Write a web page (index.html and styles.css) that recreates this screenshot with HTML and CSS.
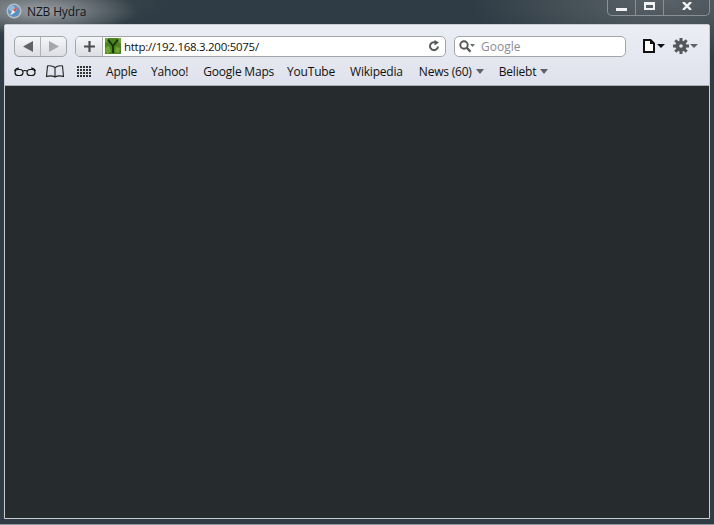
FILE: index.html
```html
<!DOCTYPE html>
<html lang="de">
<head>
<meta charset="utf-8">
<title>NZB Hydra</title>
<link rel="stylesheet" href="styles.css">
</head>
<body>
<div class="frame">
  <header class="titlebar">
    <svg class="safari" width="16" height="16" viewBox="0 0 16 16">
      <circle cx="8" cy="8" r="7.500" fill="#b9bec4"/>
      <circle cx="8" cy="8" r="6" fill="#5a8fc4"/>
      <circle cx="6" cy="5.500" r="3" fill="#8fb9dd"/>
      <path d="M12 3.500 L9.200 9.200 L4 12.500 L6.800 6.800 Z" fill="#eef2f6"/>
      <path d="M12 3.500 L9.200 9.200 L6.800 6.800 Z" fill="#d9553f"/>
    </svg>
    <span class="title">NZB Hydra</span>
    <div class="controls">
      <div class="ctl ctl-min"><span class="glyph-min"></span></div>
      <div class="ctl ctl-max"><span class="glyph-max"></span></div>
      <div class="ctl ctl-close">
        <svg width="10" height="8" viewBox="0 0 10 8"><path d="M1 0 L9 8 M9 0 L1 8" stroke="#f2f4f5" stroke-width="2.400"/></svg>
      </div>
    </div>
  </header>
  <div class="window">
    <div class="toolbar">
      <div class="row row-main">
        <div class="navgroup">
          <button class="navbtn"><svg width="10" height="11" viewBox="0 0 10 11"><path d="M10 0 V11 L0 5.500 Z" fill="#5f6266"/></svg></button>
          <button class="navbtn"><svg width="10" height="11" viewBox="0 0 10 11"><path d="M0 0 V11 L10 5.500 Z" fill="#a4a7ab"/></svg></button>
        </div>
        <div class="address">
          <span class="addbtn"><svg width="11" height="11" viewBox="0 0 11 11"><path d="M5.500 0 V11 M0 5.500 H11" stroke="#4b4d50" stroke-width="2.200"/></svg></span>
          <span class="favicon"><svg width="16" height="16" viewBox="0 0 16 16"><rect width="16" height="16" fill="#4c8420"/><path d="M0 0 H4 L2 4 L0 5 Z M12 0 H16 V6 L13 3 Z M1 9 L4 8 L6 13 L3 16 L0 14 Z M11 9 L15 10 L14 15 L10 14 Z" fill="#6ea534"/><path d="M3 1.500 L8 8 L13 1.500 M8 8 V15" fill="none" stroke="#1c3413" stroke-width="2"/></svg></span>
          <span class="url">http://192.168.3.200:5075/</span>
          <svg class="reload" width="12" height="12" viewBox="0 0 12 12"><path d="M10 6.500 A4 4 0 1 1 7.400 2.400" fill="none" stroke="#55585b" stroke-width="2"/><path d="M6.500 0 L11 2.600 L6.500 5.400 Z" fill="#55585b"/></svg>
        </div>
        <div class="search">
          <svg width="16" height="13" viewBox="0 0 16 13"><circle cx="5" cy="5" r="3.700" fill="none" stroke="#55585b" stroke-width="1.900"/><path d="M7.800 7.800 L11.500 11.800" stroke="#55585b" stroke-width="2.400"/><path d="M11 4 H16 L13.500 7 Z" fill="#6a6d70"/></svg>
          <span class="placeholder">Google</span>
        </div>
        <div class="tools">
          <span class="tool tool-page">
            <svg width="12" height="14" viewBox="0 0 12 14"><path d="M1 1 H7.500 L11 4.500 V13 H1 Z" fill="#fff" stroke="#111" stroke-width="2"/><path d="M7 1 V5 H11 Z" fill="#111"/></svg>
            <i class="caret caret-dark"></i>
          </span>
          <span class="tool">
            <svg width="16" height="16" viewBox="0 0 16 16"><circle cx="8" cy="8" r="3.700" fill="none" stroke="#55585b" stroke-width="3.800"/><path d="M8 0 V16 M0 8 H16 M2.300 2.300 L13.700 13.700 M13.700 2.300 L2.300 13.700" stroke="#55585b" stroke-width="3"/><circle cx="8" cy="8" r="1.800" fill="#e3e6ee"/></svg>
            <i class="caret"></i>
          </span>
        </div>
      </div>
      <nav class="row row-marks">
        <svg class="mark-icon" width="22" height="9" viewBox="0 0 22 9"><g fill="none" stroke="#111" stroke-width="1.100"><rect x="1" y="2.500" width="8" height="6" rx="3"/><rect x="13" y="2.500" width="8" height="6" rx="3"/><path d="M0.500 4 Q2 1 5 1 M21.500 4 Q20 1 17 1 M9 4 Q11 3 13 4"/></g></svg>
        <svg class="mark-icon mark-book" width="18" height="13" viewBox="0 0 18 13"><path d="M9 2.500 Q5.500 0 1.500 1 L0.500 11.500 Q5.500 10 9 12 Q12.500 10 17.500 11.500 L16.500 1 Q12.500 0 9 2.500 V12" fill="none" stroke="#222" stroke-width="1.100"/></svg>
        <span class="apps"><i></i><i></i><i></i><i></i><i></i><i></i><i></i><i></i><i></i><i></i><i></i><i></i><i></i><i></i><i></i><i></i><i></i><i></i><i></i><i></i></span>
        <a class="mark">Apple</a>
        <a class="mark">Yahoo!</a>
        <a class="mark mark-maps">Google Maps</a>
        <a class="mark mark-yt">YouTube</a>
        <a class="mark mark-wiki">Wikipedia</a>
        <a class="mark mark-menu mark-news">News (60) <i class="caret"></i></a>
        <a class="mark mark-menu mark-beliebt">Beliebt <i class="caret"></i></a>
      </nav>
    </div>
    <main class="content"></main>
  </div>
</div>
</body>
</html>
```

FILE: styles.css
```css
* { box-sizing: border-box; }
html, body { margin: 0; padding: 0; }
body { width: 714px; height: 525px; overflow: hidden; font-family: "Open Sans", "Noto Sans", sans-serif; }
.frame {
  width: 714px; height: 525px; display: flex; flex-direction: column;
  border-bottom: 1px solid #8f979c;
  background:
    radial-gradient(ellipse 95px 24px at 42px 11px, rgba(205,210,213,.62), rgba(205,210,213,0) 100%),
    radial-gradient(ellipse 190px 60px at 660px 0, rgba(120,125,128,.6), rgba(120,125,128,0) 100%),
    radial-gradient(ellipse 170px 40px at 0 0, rgba(110,112,112,.5), rgba(110,112,112,0) 100%),
    #2f3c45;
}
.titlebar { height: 24px; flex: none; display: flex; align-items: center; padding: 0 0 2px 6px; }
.safari { flex: none; }
.title { margin-left: 5px; font-size: 12px; color: #14161a; letter-spacing: -0.15px; }
.controls {
  margin-left: auto; margin-right: 4px; align-self: flex-start; display: flex; height: 16px;
  border: 1px solid #8b9094; border-top: none; border-radius: 0 0 5px 5px;
}
.ctl { display: flex; align-items: center; justify-content: center; height: 100%; padding-bottom: 3px; border-left: 1px solid #8b9094; }
.ctl:first-child { border-left: none; }
.ctl-min { width: 27px; }
.ctl-max { width: 28px; }
.ctl-close { width: 46px; }
.glyph-min { width: 11px; height: 3px; margin-top: 6px; background: #f0f2f3; }
.glyph-max { width: 11px; height: 8px; border: 2px solid #f0f2f3; border-top-width: 3px; }
.window {
  flex: 1; margin: 0 4px 5px; display: flex; flex-direction: column;
  border: 1px solid #c9cdd0; border-radius: 2px 2px 0 0; min-height: 0;
}
.toolbar {
  flex: none; height: 61px; padding: 10px 9px 0; border-bottom: 1px solid #a9adb3;
  background: linear-gradient(#eceef5, #dfe2ec);
}
.row { display: flex; align-items: center; }
.row-main { height: 22px; }
.navgroup {
  flex: none; width: 53px; height: 21px; display: flex; border: 1px solid #a2a5a9; border-radius: 5px;
  background: linear-gradient(#f5f6f8, #dcdee3);
}
.navbtn { flex: 1; padding: 0; border: none; background: none; display: flex; align-items: center; justify-content: center; }
.navbtn + .navbtn { border-left: 1px solid #aeb1b5; }
.address {
  flex: none; margin-left: 8px; width: 371px; height: 21px; display: flex; align-items: center;
  border: 1px solid #a2a5a9; border-radius: 5px; background: #fff; overflow: hidden;
}
.addbtn {
  flex: none; width: 27px; height: 100%; display: flex; align-items: center; justify-content: center;
  background: linear-gradient(#f5f6f8, #dcdee3); border-right: 1px solid #aeb1b5;
}
.favicon { flex: none; width: 16px; height: 16px; margin-left: 2px; display: flex; }
.url { margin-left: 3px; font-size: 11.5px; color: #111; letter-spacing: -0.28px; }
.reload { margin-left: auto; margin-right: 5px; }
.search {
  flex: none; margin-left: 8px; width: 172px; height: 21px; display: flex; align-items: center; gap: 6px; padding-left: 4px;
  border: 1px solid #a2a5a9; border-radius: 5px; background: #fff;
}
.placeholder { font-size: 12px; color: #8b8e92; }
.tools { margin-left: 17px; display: flex; align-items: center; gap: 8px; }
.tool { display: flex; align-items: center; gap: 1px; }
.tool-page { gap: 2px; }
.caret { display: inline-block; width: 0; height: 0; border: 4px solid transparent; border-top: 4px solid #5f6266; border-bottom: none; }
.caret-dark { border-top-color: #111; }
.row-marks { margin-top: 4px; height: 21px; }
.mark-icon { flex: none; }
.mark-book { margin-left: 10px; }
.apps { flex: none; margin-left: 13px; width: 15px; height: 11px; display: grid; grid-template-columns: repeat(5, 2px); grid-auto-rows: 2px; gap: 1px; }
.apps i { background: #333; }
.mark { font-size: 12px; color: #111; margin-left: 14px; white-space: nowrap; letter-spacing: -0.2px; }
.apps + .mark { margin-left: 14px; }
.mark-maps, .mark-wiki { margin-left: 15px; }
.mark-yt { margin-left: 13px; }
.mark-menu { display: flex; align-items: center; gap: 3px; }
.mark-menu .caret { border-width: 5px 4px 0; margin-left: 1px; }
.mark-news { margin-left: 16px; }
.mark-beliebt { margin-left: 15px; }
.content { flex: 1; background: #262b2e; min-height: 0; }
```
